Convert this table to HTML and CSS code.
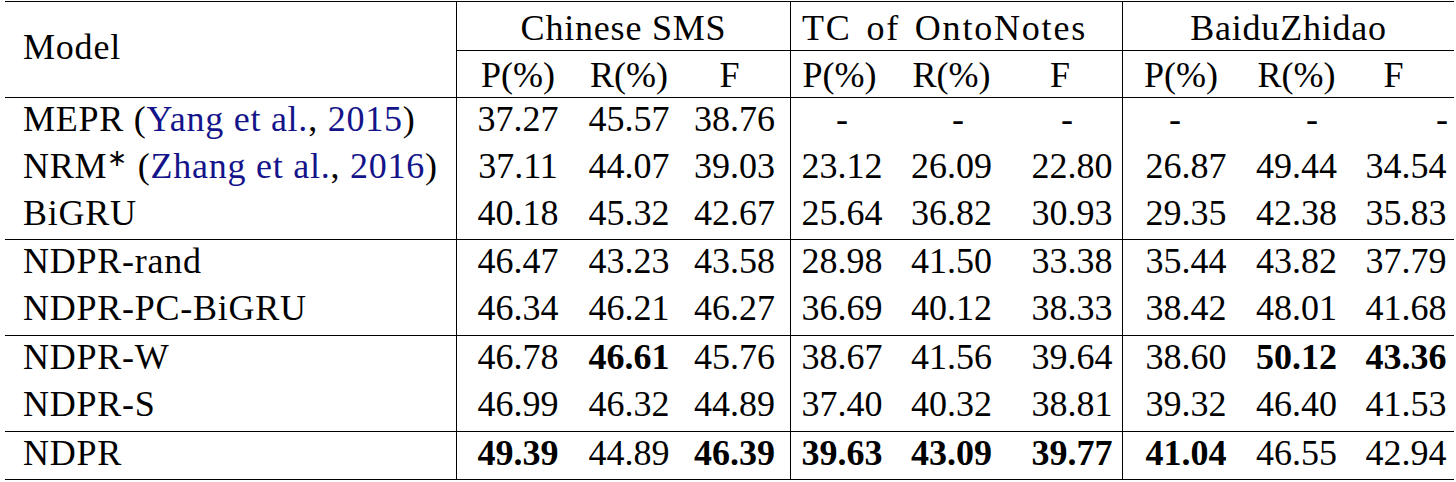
FILE: index.html
```html
<!DOCTYPE html>
<html lang="en">
<head>
<meta charset="utf-8">
<title>Results</title>
<link rel="stylesheet" href="styles.css">
</head>
<body>
<table class="results">
  <colgroup>
    <col class="w-model">
    <col class="w-c1"><col class="w-c2"><col class="w-c3">
    <col class="w-c4"><col class="w-c5"><col class="w-c6">
    <col class="w-c7"><col class="w-c8"><col class="w-c9">
  </colgroup>
  <thead>
    <tr class="hdr1">
      <th rowspan="2" class="model-h">Model</th>
      <th colspan="3">Chinese SMS</th>
      <th colspan="3" class="tc-h">TC of OntoNotes</th>
      <th colspan="3">BaiduZhidao</th>
    </tr>
    <tr class="hdr2">
      <th>P(%)</th><th>R(%)</th><th>F</th>
      <th>P(%)</th><th>R(%)</th><th>F</th>
      <th>P(%)</th><th>R(%)</th><th>F</th>
    </tr>
  </thead>
  <tbody>
    <tr class="mepr">
      <td>MEPR (<span class="cite">Yang et al.</span>, <span class="cite">2015</span>)</td>
      <td>37.27</td><td>45.57</td><td>38.76</td>
      <td>-</td><td>-</td><td>-</td>
      <td>-</td><td>-</td><td>-</td>
    </tr>
    <tr>
      <td>NRM<sup class="ast">∗</sup> (<span class="cite">Zhang et al.</span>, <span class="cite">2016</span>)</td>
      <td>37.11</td><td>44.07</td><td>39.03</td>
      <td>23.12</td><td>26.09</td><td>22.80</td>
      <td>26.87</td><td>49.44</td><td>34.54</td>
    </tr>
    <tr>
      <td>BiGRU</td>
      <td>40.18</td><td>45.32</td><td>42.67</td>
      <td>25.64</td><td>36.82</td><td>30.93</td>
      <td>29.35</td><td>42.38</td><td>35.83</td>
    </tr>
  </tbody>
  <tbody>
    <tr>
      <td>NDPR-rand</td>
      <td>46.47</td><td>43.23</td><td>43.58</td>
      <td>28.98</td><td>41.50</td><td>33.38</td>
      <td>35.44</td><td>43.82</td><td>37.79</td>
    </tr>
    <tr class="tall">
      <td>NDPR-PC-BiGRU</td>
      <td>46.34</td><td>46.21</td><td>46.27</td>
      <td>36.69</td><td>40.12</td><td>38.33</td>
      <td>38.42</td><td>48.01</td><td>41.68</td>
    </tr>
  </tbody>
  <tbody>
    <tr>
      <td>NDPR-W</td>
      <td>46.78</td><td><b>46.61</b></td><td>45.76</td>
      <td>38.67</td><td>41.56</td><td>39.64</td>
      <td>38.60</td><td><b>50.12</b></td><td><b>43.36</b></td>
    </tr>
    <tr class="tall">
      <td>NDPR-S</td>
      <td>46.99</td><td>46.32</td><td>44.89</td>
      <td>37.40</td><td>40.32</td><td>38.81</td>
      <td>39.32</td><td>46.40</td><td>41.53</td>
    </tr>
  </tbody>
  <tbody class="last">
    <tr>
      <td>NDPR</td>
      <td><b>49.39</b></td><td>44.89</td><td><b>46.39</b></td>
      <td><b>39.63</b></td><td><b>43.09</b></td><td><b>39.77</b></td>
      <td><b>41.04</b></td><td>46.55</td><td>42.94</td>
    </tr>
  </tbody>
</table>
</body>
</html>
```

FILE: styles.css
```css
html, body {
  margin: 0;
  padding: 0;
  background: #ffffff;
}

body {
  font-family: "Liberation Serif", "Times New Roman", serif;
  font-size: 36px;
  color: #000;
}

.results {
  border-collapse: separate;
  border-spacing: 0;
  table-layout: fixed;
  width: 1449px;
  margin: 1px 0 0 5px;
}

.w-model { width: 452px; }
.w-c1 { width: 122px; }
.w-c2 { width: 100px; }
.w-c3 { width: 112px; }
.w-c4 { width: 102px; }
.w-c5 { width: 117px; }
.w-c6 { width: 113px; }
.w-c7 { width: 122px; }
.w-c8 { width: 103px; }
.w-c9 { width: 106px; }

.results th,
.results td {
  font-weight: normal;
  line-height: 42px;
  padding: 0;
  vertical-align: top;
  text-align: center;
  white-space: nowrap;
}

.results b {
  font-weight: bold;
}

/* header row 1 */
.hdr1 th {
  border-top: 1px solid #000;
  padding-top: 5px;
  padding-bottom: 1px;
  letter-spacing: 0.8px;
}

.hdr1 th:nth-child(1),
.hdr1 th:nth-child(2),
.hdr1 th:nth-child(3) {
  border-right: 1px solid #000;
}

.results .model-h {
  text-align: left;
  padding-left: 18px;
  padding-top: 24px;
}

.results .tc-h {
  letter-spacing: 1.8px;
  word-spacing: 4px;
  padding-right: 24px;
}

/* header row 2 */
.hdr2 th {
  border-top: 1px solid #000;
  padding-top: 3px;
  padding-bottom: 1px;
}

.hdr2 th:nth-child(3),
.hdr2 th:nth-child(6) {
  border-right: 1px solid #000;
}

.hdr2 th:nth-child(3) { padding-right: 10px; }
.hdr2 th:nth-child(4) { padding-right: 5px; }
.hdr2 th:nth-child(6) { padding-right: 12px; }
.hdr2 th:nth-child(7) { padding-right: 6px; }
.hdr2 th:nth-child(9) { padding-right: 15px; }

/* body */
.results td {
  padding-bottom: 5px;
}

.results tr.tall td {
  padding-bottom: 6px;
}

.results td:nth-child(1) {
  text-align: left;
  padding-left: 18px;
  letter-spacing: 0.75px;
}

.results td:nth-child(1),
.results td:nth-child(4),
.results td:nth-child(7) {
  border-right: 1px solid #000;
}

.results td:nth-child(7) { padding-left: 12px; }
.results td:nth-child(8) { padding-left: 4px; }
.results td:nth-child(10) { padding-left: 10px; }

/* dash placeholders in the MEPR row */
.results tr.mepr td:nth-child(6) { padding-left: 13px; }
.results tr.mepr td:nth-child(7) { padding-left: 2px; }
.results tr.mepr td:nth-child(8) { padding-left: 0; padding-right: 18px; }
.results tr.mepr td:nth-child(9) { padding-left: 31px; }
.results tr.mepr td:nth-child(10) {
  text-align: right;
  padding-left: 0;
  padding-right: 6px;
}

.results tbody tr:first-child td {
  border-top: 1px solid #000;
}

.results tbody.last tr:last-child td {
  border-bottom: 1px solid #000;
}

.cite {
  color: #14148a;
}

.ast {
  font-size: 24px;
  line-height: 0;
  vertical-align: 12px;
}
```
